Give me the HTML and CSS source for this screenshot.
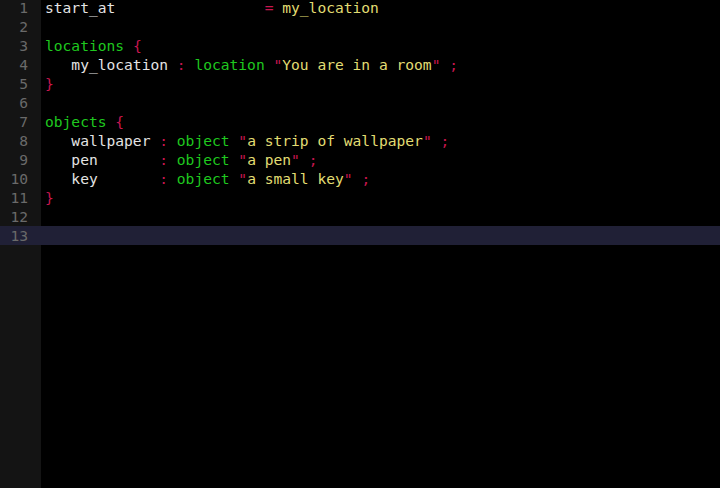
FILE: index.html
```html
<!DOCTYPE html>
<html>
<head>
<meta charset="utf-8">
<link rel="stylesheet" href="styles.css">
</head>
<body>
<div class="editor">
  <div class="line"><span class="num">1</span><span class="code">start_at                 <span class="p">=</span> <span class="s">my_location</span></span></div>
  <div class="line"><span class="num">2</span><span class="code"></span></div>
  <div class="line"><span class="num">3</span><span class="code"><span class="k">locations</span> <span class="p">{</span></span></div>
  <div class="line"><span class="num">4</span><span class="code">   my_location <span class="p">:</span> <span class="k">location</span> <span class="p">"</span><span class="s">You are in a room</span><span class="p">"</span> <span class="p">;</span></span></div>
  <div class="line"><span class="num">5</span><span class="code"><span class="p">}</span></span></div>
  <div class="line"><span class="num">6</span><span class="code"></span></div>
  <div class="line"><span class="num">7</span><span class="code"><span class="k">objects</span> <span class="p">{</span></span></div>
  <div class="line"><span class="num">8</span><span class="code">   wallpaper <span class="p">:</span> <span class="k">object</span> <span class="p">"</span><span class="s">a strip of wallpaper</span><span class="p">"</span> <span class="p">;</span></span></div>
  <div class="line"><span class="num">9</span><span class="code">   pen       <span class="p">:</span> <span class="k">object</span> <span class="p">"</span><span class="s">a pen</span><span class="p">"</span> <span class="p">;</span></span></div>
  <div class="line"><span class="num">10</span><span class="code">   key       <span class="p">:</span> <span class="k">object</span> <span class="p">"</span><span class="s">a small key</span><span class="p">"</span> <span class="p">;</span></span></div>
  <div class="line"><span class="num">11</span><span class="code"><span class="p">}</span></span></div>
  <div class="line"><span class="num">12</span><span class="code"></span></div>
  <div class="line current"><span class="num">13</span><span class="code"></span></div>
  <div class="filler"><span class="num"></span><span class="code"></span></div>
</div>
</body>
</html>
```
FILE: styles.css
```css
html, body {
  margin: 0;
  padding: 0;
  height: 100%;
  background: #000;
  overflow: hidden;
}
.editor {
  display: flex;
  flex-direction: column;
  height: calc(100% + 2px);
  margin-top: -2px;
  font-family: "DejaVu Sans Mono", "Liberation Mono", monospace;
  font-size: 14.6px;
  color: #e4e4e4;
}
.line {
  display: flex;
  height: 19px;
  line-height: 19px;
}
.num {
  flex: 0 0 41px;
  box-sizing: border-box;
  padding-right: 13px;
  text-align: right;
  background: #141414;
  color: #6a6a6a;
}
.code {
  flex: 1;
  padding-left: 4px;
  white-space: pre;
}
.current {
  background: #202036;
}
.current .num {
  background: #202036;
}
.filler {
  display: flex;
  flex: 1;
}
.k { color: #1fc81f; }
.s { color: #e2dd73; }
.p { color: #c8164f; }
```
